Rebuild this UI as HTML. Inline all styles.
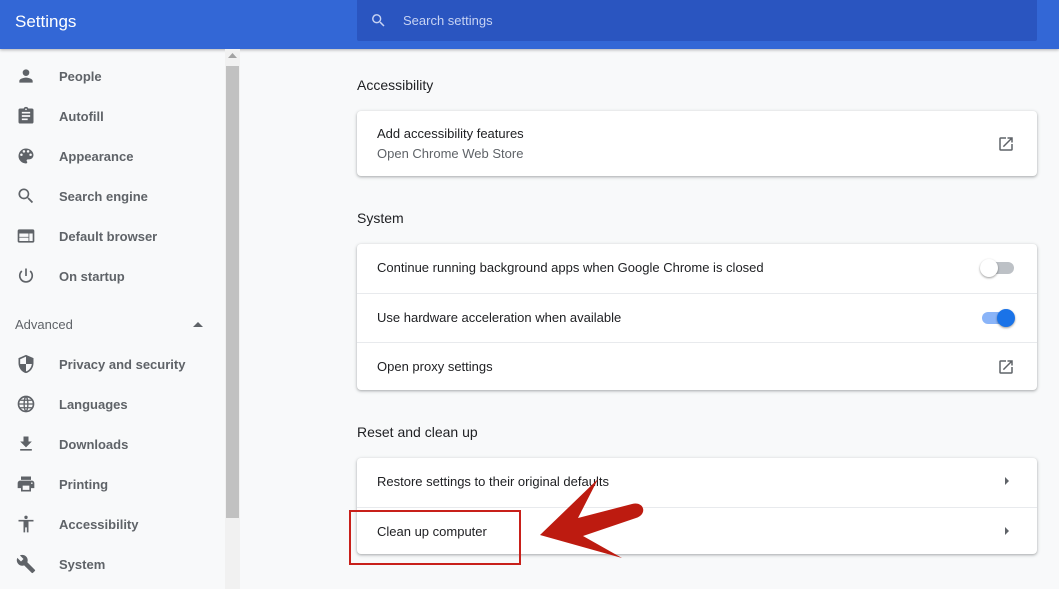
<!DOCTYPE html>
<html><head><style>
*{box-sizing:border-box;margin:0;padding:0}
body{width:1059px;height:589px;overflow:hidden;background:#f8f9fa;font-family:"Liberation Sans",sans-serif;position:relative;color:#202124}
.hdr{position:absolute;left:0;top:0;width:1059px;height:49px;background:#3367d6;box-shadow:0 1px 3px rgba(0,0,0,.3)}
.hdr .t{position:absolute;left:15px;top:12px;color:#fff;font-size:17px}
.search{position:absolute;left:357px;top:0;width:680px;height:41px;background:#2a55c0;border-radius:0 0 2px 2px}
.search span{position:absolute;left:46px;top:13px;color:#c7d3f3;font-size:13px}
.side{position:absolute;left:0;top:49px;width:225px;height:540px}
.it{position:absolute;left:0;height:40px;width:225px;font-size:13px;color:#5f6368;font-weight:bold}
.it svg{position:absolute;left:16px;top:10px}
.it span{position:absolute;left:59px;top:13px}
.sb{position:absolute;left:225px;top:49px;width:15px;height:540px;background:#f1f1f1}
.sb div{position:absolute;left:1px;top:17px;width:13px;height:452px;background:#c1c1c1}
.h{position:absolute;left:357px;font-size:14px;color:#202124}
.card{position:absolute;left:357px;width:680px;background:#fff;border-radius:4px;box-shadow:0 1px 2px rgba(60,64,67,.3),0 1px 3px 1px rgba(60,64,67,.12)}
.row{position:relative;height:49px;border-top:1px solid #e8eaed;font-size:13px}
.row:first-child{border-top:none}
.row span{position:absolute;left:20px;top:16px}
.tg{position:absolute;right:23px;top:18px;width:32px;height:12px;border-radius:6px;background:#bdc1c6}
.tg i{position:absolute;top:-3px;width:18px;height:18px;border-radius:50%;background:#fff;box-shadow:0 1px 2px rgba(0,0,0,.4)}
.ext{position:absolute;right:22px;top:15px}
.tri{position:absolute;right:28px;top:19px;width:0;height:0;border-left:4px solid #5f6368;border-top:4px solid transparent;border-bottom:4px solid transparent}
</style></head><body>
<div class="hdr"><div class="t">Settings</div>
<div class="search"><svg style="position:absolute;left:13px;top:12px" width="17" height="17" viewBox="0 0 24 24"><path fill="#c7d3f3" d="M15.5 14h-.8l-.3-.3A6.5 6.5 0 1 0 9.5 16a6.5 6.5 0 0 0 4.2-1.6l.3.3v.8l5 5 1.5-1.5-5-5zm-6 0a4.5 4.5 0 1 1 0-9 4.5 4.5 0 0 1 0 9z"/></svg><span>Search settings</span></div></div>
<div class="side">
<div class="it" style="top:7px"><svg width="20" height="20" viewBox="0 0 24 24"><path fill="#5f6368" d="M12 12a4 4 0 1 0 0-8 4 4 0 0 0 0 8zm0 2c-2.7 0-8 1.3-8 4v2h16v-2c0-2.7-5.3-4-8-4z"/></svg><span>People</span></div>
<div class="it" style="top:47px"><svg width="20" height="20" viewBox="0 0 24 24"><path fill="#5f6368" d="M19 3h-4.2A3 3 0 0 0 12 1a3 3 0 0 0-2.8 2H5a2 2 0 0 0-2 2v14a2 2 0 0 0 2 2h14a2 2 0 0 0 2-2V5a2 2 0 0 0-2-2zm-7 0a1 1 0 1 1 0 2 1 1 0 0 1 0-2zm2 14H7v-2h7v2zm3-4H7v-2h10v2zm0-4H7V7h10v2z"/></svg><span>Autofill</span></div>
<div class="it" style="top:87px"><svg width="20" height="20" viewBox="0 0 24 24"><path fill="#5f6368" d="M12 3a9 9 0 0 0 0 18c.8 0 1.5-.7 1.5-1.5 0-.4-.1-.7-.4-1-.2-.3-.4-.6-.4-1 0-.8.7-1.5 1.5-1.5H16a5 5 0 0 0 5-5c0-4.4-4-8-9-8zm-5.5 9a1.5 1.5 0 1 1 0-3 1.5 1.5 0 0 1 0 3zm3-4a1.5 1.5 0 1 1 0-3 1.5 1.5 0 0 1 0 3zm5 0a1.5 1.5 0 1 1 0-3 1.5 1.5 0 0 1 0 3zm3 4a1.5 1.5 0 1 1 0-3 1.5 1.5 0 0 1 0 3z"/></svg><span>Appearance</span></div>
<div class="it" style="top:127px"><svg width="20" height="20" viewBox="0 0 24 24"><path fill="#5f6368" d="M15.5 14h-.8l-.3-.3A6.5 6.5 0 1 0 9.5 16a6.5 6.5 0 0 0 4.2-1.6l.3.3v.8l5 5 1.5-1.5-5-5zm-6 0a4.5 4.5 0 1 1 0-9 4.5 4.5 0 0 1 0 9z"/></svg><span>Search engine</span></div>
<div class="it" style="top:167px"><svg width="20" height="20" viewBox="0 0 24 24"><path fill="#5f6368" d="M20 4H4a2 2 0 0 0-2 2v12a2 2 0 0 0 2 2h16a2 2 0 0 0 2-2V6a2 2 0 0 0-2-2zm-5 14H4v-4h11v4zm0-5H4V9h11v4zm5 5h-4V9h4v9z"/></svg><span>Default browser</span></div>
<div class="it" style="top:207px"><svg width="20" height="20" viewBox="0 0 24 24"><path fill="none" stroke="#5f6368" stroke-width="2" d="M12 3v9M7 6a7.5 7.5 0 1 0 10 0"/></svg><span>On startup</span></div>
<div class="it" style="top:255px;font-weight:normal;color:#5f6368"><span style="left:15px">Advanced</span><div style="position:absolute;left:193px;top:18px;border-bottom:5px solid #5f6368;border-left:5px solid transparent;border-right:5px solid transparent"></div></div>
<div class="it" style="top:295px"><svg width="20" height="20" viewBox="0 0 24 24"><path fill="#5f6368" d="M12 1 3 5v6c0 5.5 3.8 10.7 9 12 5.2-1.3 9-6.5 9-12V5l-9-4zm0 11h7c-.5 4.1-3.3 7.8-7 8.9V12H5V6.3l7-3.1V12z"/></svg><span>Privacy and security</span></div>
<div class="it" style="top:335px"><svg width="20" height="20" viewBox="0 0 24 24"><circle cx="12" cy="12" r="9" fill="none" stroke="#5f6368" stroke-width="2"/><path fill="none" stroke="#5f6368" stroke-width="1.6" d="M3 12h18M12 3c-3 3-3 15 0 18M12 3c3 3 3 15 0 18M5 7.5h14M5 16.5h14"/></svg><span>Languages</span></div>
<div class="it" style="top:375px"><svg width="20" height="20" viewBox="0 0 24 24"><path fill="#5f6368" d="M19 9h-4V3H9v6H5l7 7 7-7zM5 18v2h14v-2H5z"/></svg><span>Downloads</span></div>
<div class="it" style="top:415px"><svg width="20" height="20" viewBox="0 0 24 24"><path fill="#5f6368" d="M19 8H5a3 3 0 0 0-3 3v6h4v4h12v-4h4v-6a3 3 0 0 0-3-3zm-3 11H8v-5h8v5zm3-7a1 1 0 1 1 0-2 1 1 0 0 1 0 2zm-1-9H6v4h12V3z"/></svg><span>Printing</span></div>
<div class="it" style="top:455px"><svg width="20" height="20" viewBox="0 0 24 24"><path fill="#5f6368" d="M12 2a2 2 0 1 1 0 4 2 2 0 0 1 0-4zm9 7h-6v13h-2v-6h-2v6H9V9H3V7h18v2z"/></svg><span>Accessibility</span></div>
<div class="it" style="top:495px"><svg width="20" height="20" viewBox="0 0 24 24"><path fill="#5f6368" d="M22.7 19 13.6 9.9c.9-2.3.4-5-1.5-6.9-2-2-5-2.4-7.4-1.3L9 6 6 9 1.6 4.7C.4 7.1.9 10.1 2.9 12.1c1.9 1.9 4.6 2.4 6.9 1.5l9.1 9.1c.4.4 1 .4 1.4 0l2.3-2.300c.5-.4.5-1.1.1-1.4z"/></svg><span>System</span></div>
</div>
<div class="sb"><div></div><svg style="position:absolute;left:3px;top:4px" width="9" height="6"><path d="M0 5 4.5 0 9 5z" fill="#a3a3a3"/></svg></div>

<div class="h" style="top:77px">Accessibility</div>
<div class="card" style="top:111px;height:65px"><div style="position:absolute;left:20px;top:15px;font-size:13px">Add accessibility features</div><div style="position:absolute;left:20px;top:35px;font-size:13px;color:#5f6368">Open Chrome Web Store</div>
<svg class="ext" style="top:24px" width="18" height="18" viewBox="0 0 24 24"><path fill="#5f6368" d="M19 19H5V5h7V3H5a2 2 0 0 0-2 2v14a2 2 0 0 0 2 2h14a2 2 0 0 0 2-2v-7h-2v7zM14 3v2h3.6l-9.8 9.8 1.4 1.4L19 6.4V10h2V3h-7z"/></svg></div>

<div class="h" style="top:210px">System</div>
<div class="card" style="top:244px;height:146px">
<div class="row"><span>Continue running background apps when Google Chrome is closed</span><div class="tg"><i style="left:-2px"></i></div></div>
<div class="row"><span>Use hardware acceleration when available</span><div class="tg" style="background:#8ab4f8"><i style="left:15px;background:#1a73e8"></i></div></div>
<div class="row"><span>Open proxy settings</span><svg class="ext" width="18" height="18" viewBox="0 0 24 24"><path fill="#5f6368" d="M19 19H5V5h7V3H5a2 2 0 0 0-2 2v14a2 2 0 0 0 2 2h14a2 2 0 0 0 2-2v-7h-2v7zM14 3v2h3.6l-9.8 9.8 1.4 1.4L19 6.4V10h2V3h-7z"/></svg></div>
</div>

<div class="h" style="top:424px">Reset and clean up</div>
<div class="card" style="top:458px;height:96px">
<div class="row"><span>Restore settings to their original defaults</span><div class="tri"></div></div>
<div class="row"><span>Clean up computer</span><div class="tri"></div></div>
</div>
<div style="position:absolute;left:349px;top:510px;width:172px;height:55px;border:2px solid #c8201a"></div>
<svg style="position:absolute;left:0;top:0" width="1059" height="589"><path fill="#bd1b10" d="M540 535 598 479 578 518 632 504C644 501 648 514 636 518L583 536 622 558Z"/></svg>
</body></html>
